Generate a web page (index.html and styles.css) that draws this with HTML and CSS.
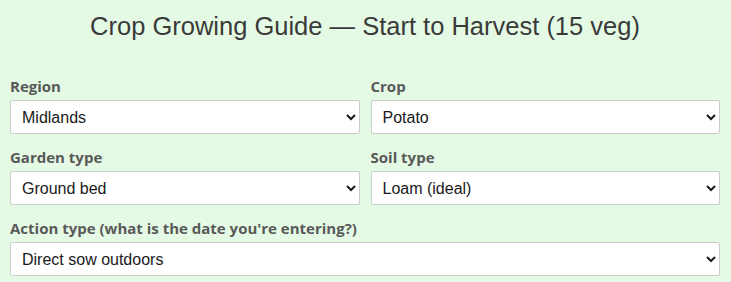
FILE: index.html
```html
<!DOCTYPE html>
<html lang="en">
<head>
<meta charset="utf-8">
<title>Crop Growing Guide</title>
<link rel="stylesheet" href="styles.css">
</head>
<body>
<div class="page">
  <h1 class="title">Crop Growing Guide — Start to Harvest (15 veg)</h1>
  <div class="grid">
    <div class="field">
      <label class="label">Region</label>
      <select class="select"><option>Midlands</option></select>
    </div>
    <div class="field">
      <label class="label">Crop</label>
      <select class="select"><option>Potato</option></select>
    </div>
    <div class="field">
      <label class="label">Garden type</label>
      <select class="select"><option>Ground bed</option></select>
    </div>
    <div class="field">
      <label class="label">Soil type</label>
      <select class="select"><option>Loam (ideal)</option></select>
    </div>
    <div class="field wide">
      <label class="label">Action type (what is the date you're entering?)</label>
      <select class="select"><option>Direct sow outdoors</option></select>
    </div>
  </div>
</div>
</body>
</html>
```
FILE: styles.css
```css
html, body {
  margin: 0;
  padding: 0;
  background: #e5fae5;
}
.page {
  padding: 0 11px 0 10px;
  font-family: "Liberation Sans", Arial, sans-serif;
}
.title {
  margin: 0;
  padding-top: 11px;
  height: 77px;
  box-sizing: border-box;
  text-align: center;
  font-weight: normal;
  font-size: 25.5px;
  line-height: 30px;
  color: #3a3a3a;
}
.grid {
  display: grid;
  grid-template-columns: 1fr 1fr;
  column-gap: 11px;
  row-gap: 14px;
}
.field {
  display: flex;
  flex-direction: column;
}
.wide {
  grid-column: 1 / 3;
}
.label {
  font-family: "Open Sans", sans-serif;
  font-weight: bold;
  font-size: 15px;
  line-height: 19px;
  color: #595959;
  margin-bottom: 4px;
}
.select {
  height: 34px;
  border: 1px solid #ccc;
  border-radius: 2px;
  background: #fff;
  font-family: "Liberation Sans", Arial, sans-serif;
  font-size: 16px;
  color: #1a1a1a;
  padding: 0 7px;
}
```
